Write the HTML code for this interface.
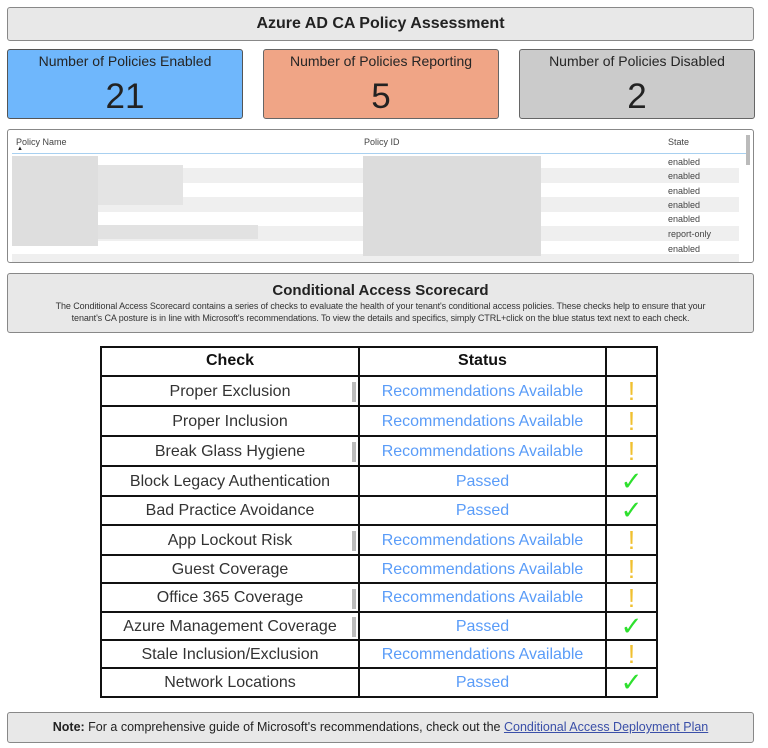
<!DOCTYPE html>
<html><head><style>
*{box-sizing:border-box;margin:0;padding:0}
body{width:768px;height:748px;background:#fff;font-family:"Liberation Sans",sans-serif;position:relative;overflow:hidden;color:#222}
.abs{position:absolute}
.box{position:absolute;border:1px solid #888;border-radius:3px}
.card{text-align:center}
.card .t{font-size:14px;margin-top:3px;color:#252525}
.card .n{font-size:35px;margin-top:8px;color:#222}
.r{position:absolute;left:101px;width:556px;border-top:2px solid #111}
.c{position:absolute;top:0;bottom:0;display:flex;align-items:center;justify-content:center}
.c1{left:0;width:258px;font-size:16px;color:#333}
.c2{left:258px;width:247px;font-size:16px;color:#5a9cf8}
.c3{left:505px;width:51px}
.ex{color:#f0c030;font-size:26px;font-family:"Liberation Sans",sans-serif}
.ck{color:#2ee02e;font-size:26px;font-family:"DejaVu Sans",sans-serif;font-weight:200}
.sb{position:absolute;left:251px;width:4px;background:#bbb}
.st{position:absolute;left:668px;font-size:9px;color:#444}
.bl{position:absolute;background:#e6e6e6}
</style></head><body>
<div class="box" style="left:7px;top:7px;width:747px;height:34px;background:#e8e8e8;text-align:center;font-weight:bold;font-size:16px;line-height:32px">Azure AD CA Policy Assessment</div>

<div class="box card" style="left:7px;top:49px;width:236px;height:70px;background:#6fb7fc;border-color:#555"><div class="t">Number of Policies Enabled</div><div class="n">21</div></div>
<div class="box card" style="left:263px;top:49px;width:236px;height:70px;background:#f0a586;border-color:#666"><div class="t">Number of Policies Reporting</div><div class="n">5</div></div>
<div class="box card" style="left:519px;top:49px;width:236px;height:70px;background:#cbcbcb;border-color:#666"><div class="t">Number of Policies Disabled</div><div class="n">2</div></div>

<div class="box" style="left:7px;top:129px;width:747px;height:134px;background:#fff;overflow:hidden">
<div class="abs" style="left:8px;top:7px;font-size:9px;color:#444">Policy Name</div>
<div class="abs" style="left:9px;top:16px;font-size:6px">▲</div>
<div class="abs" style="left:356px;top:7px;font-size:9px;color:#444">Policy ID</div>
<div class="abs" style="left:660px;top:7px;font-size:9px;color:#444">State</div>
<div class="abs" style="left:4px;top:23px;width:736px;height:1px;background:#a8d0f0"></div>
<div class="abs" style="left:738px;top:5px;width:4px;height:30px;background:#bbb"></div>
<div class="bl" style="left:4px;top:38px;width:727px;height:15px;background:#efefef"></div>
<div class="bl" style="left:4px;top:67px;width:727px;height:15px;background:#efefef"></div>
<div class="bl" style="left:4px;top:96px;width:727px;height:15px;background:#efefef"></div>
<div class="bl" style="left:4px;top:124px;width:727px;height:10px;background:#efefef"></div>
<div class="bl" style="left:4px;top:26px;width:86px;height:90px;background:#dedede"></div>
<div class="bl" style="left:90px;top:35px;width:85px;height:40px;background:#e4e4e4"></div>
<div class="bl" style="left:90px;top:95px;width:160px;height:14px;background:#e2e2e2"></div>
<div class="bl" style="left:355px;top:26px;width:178px;height:100px;background:#dcdcdc"></div>
<div class="st" style="left:660px;top:27px">enabled</div>
<div class="st" style="left:660px;top:41px">enabled</div>
<div class="st" style="left:660px;top:56px">enabled</div>
<div class="st" style="left:660px;top:70px">enabled</div>
<div class="st" style="left:660px;top:84px">enabled</div>
<div class="st" style="left:660px;top:99px">report-only</div>
<div class="st" style="left:660px;top:114px">enabled</div>
</div>

<div class="box" style="left:7px;top:273px;width:747px;height:60px;background:#e8e8e8;text-align:center">
<div style="font-weight:bold;font-size:15px;margin-top:8px">Conditional Access Scorecard</div>
<div style="font-size:9px;line-height:12px;color:#333;margin-top:1px;letter-spacing:-0.1px">The Conditional Access Scorecard contains a series of checks to evaluate the health of your tenant's conditional access policies. These checks help to ensure that your<br>tenant's CA posture is in line with Microsoft's recommendations. To view the details and specifics, simply CTRL+click on the blue status text next to each check.</div>
</div>

<div class="abs" style="left:100px;top:346px;width:558px;height:352px;border:2px solid #111"></div>
<div class="abs" style="left:358px;top:346px;width:2px;height:352px;background:#111"></div>
<div class="abs" style="left:605px;top:346px;width:2px;height:352px;background:#111"></div>
<div class="r" style="top:346px;height:30px;border-top:none"><div class="c c1" style="font-weight:bold;color:#111">Check</div><div class="c c2" style="font-weight:bold;color:#111">Status</div></div>

<div class="r" style="top:375px;height:31px"><div class="c c1">Proper Exclusion</div><div class="sb" style="top:5px;height:20px"></div><div class="c c2">Recommendations Available</div><div class="c c3"><span class="ex">!</span></div></div>
<div class="r" style="top:405px;height:31px"><div class="c c1">Proper Inclusion</div><div class="c c2">Recommendations Available</div><div class="c c3"><span class="ex">!</span></div></div>
<div class="r" style="top:435px;height:31px"><div class="c c1">Break Glass Hygiene</div><div class="sb" style="top:5px;height:20px"></div><div class="c c2">Recommendations Available</div><div class="c c3"><span class="ex">!</span></div></div>
<div class="r" style="top:465px;height:31px"><div class="c c1">Block Legacy Authentication</div><div class="c c2">Passed</div><div class="c c3"><span class="ck">✓</span></div></div>
<div class="r" style="top:495px;height:30px"><div class="c c1">Bad Practice Avoidance</div><div class="c c2">Passed</div><div class="c c3"><span class="ck">✓</span></div></div>
<div class="r" style="top:524px;height:31px"><div class="c c1">App Lockout Risk</div><div class="sb" style="top:5px;height:20px"></div><div class="c c2">Recommendations Available</div><div class="c c3"><span class="ex">!</span></div></div>
<div class="r" style="top:554px;height:29px"><div class="c c1">Guest Coverage</div><div class="c c2">Recommendations Available</div><div class="c c3"><span class="ex">!</span></div></div>
<div class="r" style="top:582px;height:30px"><div class="c c1">Office 365 Coverage</div><div class="sb" style="top:5px;height:20px"></div><div class="c c2">Recommendations Available</div><div class="c c3"><span class="ex">!</span></div></div>
<div class="r" style="top:611px;height:29px"><div class="c c1">Azure Management Coverage</div><div class="sb" style="top:4px;height:20px"></div><div class="c c2">Passed</div><div class="c c3"><span class="ck">✓</span></div></div>
<div class="r" style="top:639px;height:29px"><div class="c c1">Stale Inclusion/Exclusion</div><div class="c c2">Recommendations Available</div><div class="c c3"><span class="ex">!</span></div></div>
<div class="r" style="top:667px;height:29px"><div class="c c1">Network Locations</div><div class="c c2">Passed</div><div class="c c3"><span class="ck">✓</span></div></div>

<div class="box" style="left:7px;top:712px;width:747px;height:31px;background:#e8e8e8;text-align:center;font-size:12.5px;line-height:29px;color:#222"><b>Note:</b> For a comprehensive guide of Microsoft's recommendations, check out the <span style="color:#3a4fa8;text-decoration:underline">Conditional Access Deployment Plan</span></div>
</body></html>
